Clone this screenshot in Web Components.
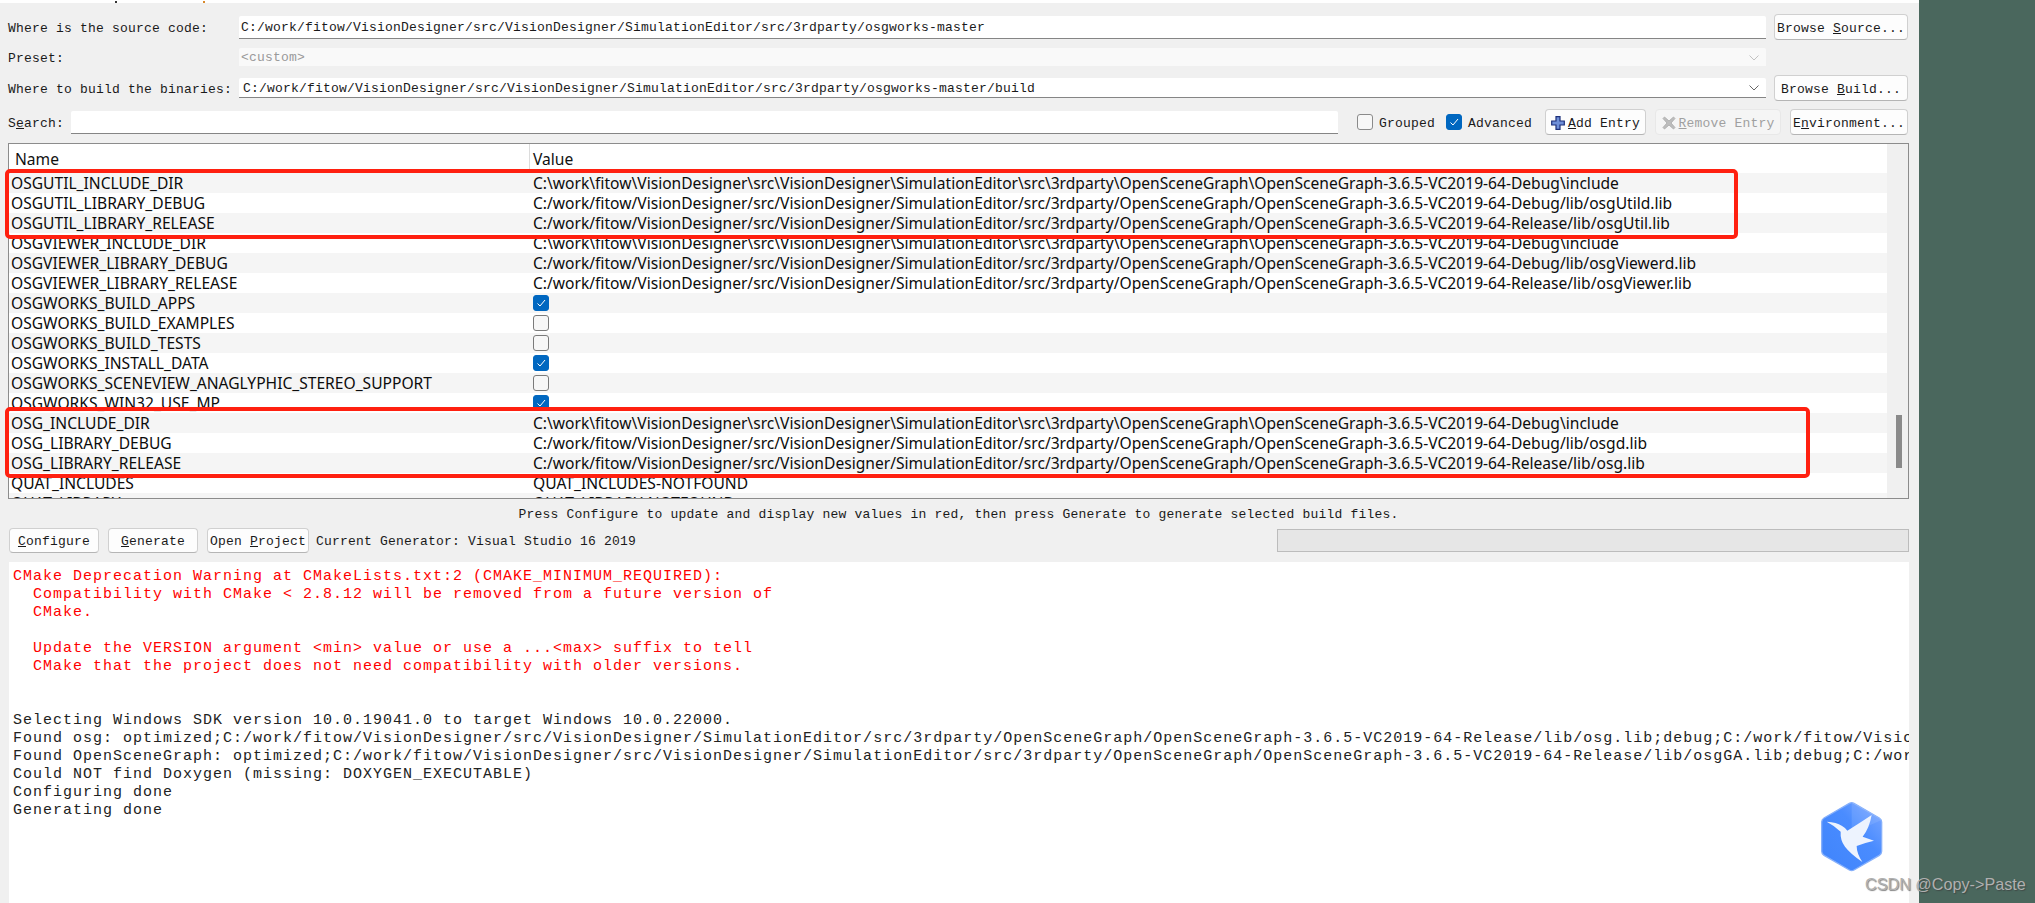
<!DOCTYPE html>
<html><head><meta charset="utf-8">
<style>
html,body{margin:0;padding:0;height:903px;overflow:hidden;background:#4a675d}
body{font-family:"Liberation Mono",monospace}
</style></head><body>
<cm-window>
  <cm-strip></cm-strip>
  <cm-form>
    <cm-label>Where is the source code:</cm-label>
    <cm-field h="23">C:/work/fitow/VisionDesigner/src/VisionDesigner/SimulationEditor/src/3rdparty/osgworks-master</cm-field>
    <cm-btn>Browse <u>S</u>ource...</cm-btn>
    <cm-label>Preset:</cm-label>
    <cm-field h="19" disabled combo>&lt;custom&gt;</cm-field>
    <span></span>
    <cm-label>Where to build the binaries:</cm-label>
    <cm-field h="20" combo style="padding-left:4px">C:/work/fitow/VisionDesigner/src/VisionDesigner/SimulationEditor/src/3rdparty/osgworks-master/build</cm-field>
    <cm-btn>Browse <u>B</u>uild...</cm-btn>
  </cm-form>
  <cm-search>
    <cm-label>S<u>e</u>arch:</cm-label>
    <cm-field h="23" style="width:1267px;margin-left:7px"></cm-field>
    <cm-check style="margin-left:19px">Grouped</cm-check>
    <cm-check checked style="margin-left:11px">Advanced</cm-check>
    <cm-btn style="width:101px;margin-left:13px"><svg slot="icon" width="14" height="14" viewBox="0 0 14 14"><path d="M5 .7h4v4.300h4.300v4H9v4.300H5V9H.7V5H5z" fill="#6f8fd8" stroke="#1c2f7a" stroke-width="1.200"/></svg><u>A</u>dd Entry</cm-btn>
    <cm-btn disabled style="width:126px;margin-left:9px"><svg slot="icon" width="14" height="14" viewBox="0 0 14 14"><path d="M2.500 1 7 5l4.500-4L13 2.500 9 7l4 4.500L11.500 13 7 9l-4.500 4L1 11.500 5 7 1 2.500z" fill="#bdbdbd" stroke="#a8a8a8" stroke-width=".8"/></svg><u>R</u>emove Entry</cm-btn>
    <cm-btn style="width:118px;margin-left:9px">E<u>n</u>vironment...</cm-btn>
  </cm-search>
  <cm-table>
    <cm-row name="OSGUTIL_INCLUDE_DIR" value="C:\work\fitow\VisionDesigner\src\VisionDesigner\SimulationEditor\src\3rdparty\OpenSceneGraph\OpenSceneGraph-3.6.5-VC2019-64-Debug\include"></cm-row>
    <cm-row name="OSGUTIL_LIBRARY_DEBUG" value="C:/work/fitow/VisionDesigner/src/VisionDesigner/SimulationEditor/src/3rdparty/OpenSceneGraph/OpenSceneGraph-3.6.5-VC2019-64-Debug/lib/osgUtild.lib"></cm-row>
    <cm-row name="OSGUTIL_LIBRARY_RELEASE" value="C:/work/fitow/VisionDesigner/src/VisionDesigner/SimulationEditor/src/3rdparty/OpenSceneGraph/OpenSceneGraph-3.6.5-VC2019-64-Release/lib/osgUtil.lib"></cm-row>
    <cm-row name="OSGVIEWER_INCLUDE_DIR" value="C:\work\fitow\VisionDesigner\src\VisionDesigner\SimulationEditor\src\3rdparty\OpenSceneGraph\OpenSceneGraph-3.6.5-VC2019-64-Debug\include"></cm-row>
    <cm-row name="OSGVIEWER_LIBRARY_DEBUG" value="C:/work/fitow/VisionDesigner/src/VisionDesigner/SimulationEditor/src/3rdparty/OpenSceneGraph/OpenSceneGraph-3.6.5-VC2019-64-Debug/lib/osgViewerd.lib"></cm-row>
    <cm-row name="OSGVIEWER_LIBRARY_RELEASE" value="C:/work/fitow/VisionDesigner/src/VisionDesigner/SimulationEditor/src/3rdparty/OpenSceneGraph/OpenSceneGraph-3.6.5-VC2019-64-Release/lib/osgViewer.lib"></cm-row>
    <cm-row name="OSGWORKS_BUILD_APPS" bool="on"></cm-row>
    <cm-row name="OSGWORKS_BUILD_EXAMPLES" bool="off"></cm-row>
    <cm-row name="OSGWORKS_BUILD_TESTS" bool="off"></cm-row>
    <cm-row name="OSGWORKS_INSTALL_DATA" bool="on"></cm-row>
    <cm-row name="OSGWORKS_SCENEVIEW_ANAGLYPHIC_STEREO_SUPPORT" bool="off"></cm-row>
    <cm-row name="OSGWORKS_WIN32_USE_MP" bool="on"></cm-row>
    <cm-row name="OSG_INCLUDE_DIR" value="C:\work\fitow\VisionDesigner\src\VisionDesigner\SimulationEditor\src\3rdparty\OpenSceneGraph\OpenSceneGraph-3.6.5-VC2019-64-Debug\include"></cm-row>
    <cm-row name="OSG_LIBRARY_DEBUG" value="C:/work/fitow/VisionDesigner/src/VisionDesigner/SimulationEditor/src/3rdparty/OpenSceneGraph/OpenSceneGraph-3.6.5-VC2019-64-Debug/lib/osgd.lib"></cm-row>
    <cm-row name="OSG_LIBRARY_RELEASE" value="C:/work/fitow/VisionDesigner/src/VisionDesigner/SimulationEditor/src/3rdparty/OpenSceneGraph/OpenSceneGraph-3.6.5-VC2019-64-Release/lib/osg.lib"></cm-row>
    <cm-row name="QUAT_INCLUDES" value="QUAT_INCLUDES-NOTFOUND"></cm-row>
    <cm-row name="QUAT_LIBRARY" value="QUAT_LIBRARY-NOTFOUND"></cm-row>
  </cm-table>
  <cm-status>Press Configure to update and display new values in red, then press Generate to generate selected build files.</cm-status>
  <cm-actions>
    <cm-btn style="width:90px"><u>C</u>onfigure</cm-btn>
    <cm-btn style="width:90px;margin-left:9px"><u>G</u>enerate</cm-btn>
    <cm-btn style="width:102px;margin-left:9px">Open <u>P</u>roject</cm-btn>
    <cm-label style="margin-left:7px;flex:1">Current Generator: Visual Studio 16 2019</cm-label>
    <cm-progress></cm-progress>
  </cm-actions>
  <cm-log>
    <cm-line red>CMake Deprecation Warning at CMakeLists.txt:2 (CMAKE_MINIMUM_REQUIRED):</cm-line>
    <cm-line red>  Compatibility with CMake &lt; 2.8.12 will be removed from a future version of</cm-line>
    <cm-line red>  CMake.</cm-line>
    <cm-line red> </cm-line>
    <cm-line red>  Update the VERSION argument &lt;min&gt; value or use a ...&lt;max&gt; suffix to tell</cm-line>
    <cm-line red>  CMake that the project does not need compatibility with older versions.</cm-line>
    <cm-line> </cm-line>
    <cm-line> </cm-line>
    <cm-line>Selecting Windows SDK version 10.0.19041.0 to target Windows 10.0.22000.</cm-line>
    <cm-line>Found osg: optimized;C:/work/fitow/VisionDesigner/src/VisionDesigner/SimulationEditor/src/3rdparty/OpenSceneGraph/OpenSceneGraph-3.6.5-VC2019-64-Release/lib/osg.lib;debug;C:/work/fitow/VisionDesigner/src</cm-line>
    <cm-line>Found OpenSceneGraph: optimized;C:/work/fitow/VisionDesigner/src/VisionDesigner/SimulationEditor/src/3rdparty/OpenSceneGraph/OpenSceneGraph-3.6.5-VC2019-64-Release/lib/osgGA.lib;debug;C:/work/fitow</cm-line>
    <cm-line>Could NOT find Doxygen (missing: DOXYGEN_EXECUTABLE)</cm-line>
    <cm-line>Configuring done</cm-line>
    <cm-line>Generating done</cm-line>
  </cm-log>
  <cm-redbox style="left:5px;top:169px;width:1733px;height:70px"></cm-redbox>
  <cm-redbox style="left:5px;top:407px;width:1805px;height:71px"></cm-redbox>
  <cm-logo></cm-logo>
</cm-window>
<cm-mark>CSDN @Copy-&gt;Paste</cm-mark>
<script>
function def(name, css, html, extra){
  customElements.define(name, class extends HTMLElement{
    constructor(){super();this.attachShadow({mode:'open'}).innerHTML='<style>'+css+'</style>'+(html||'<slot></slot>');}
    connectedCallback(){ if(extra) extra.call(this); }
  });
}
const mono='font:13px/1 "Liberation Mono",monospace;letter-spacing:.2px;color:#1a1a1a;';
def('cm-window',':host{display:flex;flex-direction:column;width:1919px;height:903px;background:#f0f0f0;position:relative;overflow:hidden}');
def('cm-strip',`:host{display:flex;height:3px;background:#fff;margin-bottom:11px}
i{display:block;width:2px;height:2px;margin-top:1px}`,
'<i style="background:#333;margin-left:115px"></i><i style="background:#d9892b;margin-left:86px"></i>');
def('cm-form',':host{display:grid;grid-template-columns:231px 1527px 142px;grid-template-rows:26px 19px 26px;row-gap:8px;align-items:center;padding-left:8px}::slotted(cm-btn){margin-left:8px}');
def('cm-label',':host{display:block;white-space:pre;padding-top:2px;'+mono+'}');
def('cm-field',`:host{display:flex;align-items:center;justify-content:space-between;box-sizing:border-box;background:#fff;border-bottom:1.5px solid #858585;border-radius:2px 2px 0 0;padding:1px 6px 0 2px;white-space:pre;overflow:hidden;${mono}}
:host([disabled]){background:#f9f9f9;border-bottom:1px solid #f0f0f0;color:#9a9a9a}
svg{flex:none;margin-right:1px}`,
'<slot></slot>',function(){
  this.style.height=this.getAttribute('h')+'px';
  if(this.hasAttribute('combo')){
    const d=this.hasAttribute('disabled');
    this.shadowRoot.innerHTML+='<svg width="10" height="6" viewBox="0 0 10 6"><path d="M.5.5 5 5 9.500.5" fill="none" stroke="'+(d?'#c2c2c2':'#666')+'"/></svg>';
  }
});
def('cm-btn',`:host{display:flex;align-items:center;justify-content:center;gap:3px;box-sizing:border-box;height:26px;padding-top:2px;background:#fdfdfd;border:1px solid #d0d0d0;border-bottom-color:#b5b5b5;border-radius:4px;white-space:pre;${mono}}
:host([disabled]){background:#f5f5f5;border-color:#e8e8e8;color:#a0a0a0}
span{display:block}`,'<slot name="icon"></slot><span><slot></slot></span>');
def('cm-search',':host{display:flex;align-items:center;height:26px;margin-top:8px;padding-left:8px}');
def('cm-check',`:host{display:flex;align-items:center;gap:6px;white-space:pre;${mono}}
i{display:block;box-sizing:border-box;width:16px;height:16px;border-radius:3px;border:1px solid #8a8a8a;background:#f7f7f7}
:host([checked]) i{background:#0067c0;border-color:#0067c0}
svg{display:none;margin:2px}:host([checked]) svg{display:block}
span{display:block;padding-top:2px}`,
'<i><svg width="10" height="10" viewBox="0 0 10 10"><path d="M1.500 5.500 4 8 9 2" fill="none" stroke="#fff" stroke-width="1"/></svg></i><span><slot></slot></span>');
def('cm-table',`:host{display:block;box-sizing:border-box;height:356px;margin:8px 10px 0 8px;background:#fff;border:1px solid #8c8c8c;position:relative;overflow:hidden;font:15.6px "Noto Sans",sans-serif}
.h{display:flex;height:29px;align-items:center;width:1878px;color:#111}
.h span:first-child{width:521px;padding-left:6px;box-sizing:border-box;height:100%;display:flex;align-items:center;border-right:1px solid #dcdcdc}
.h span:last-child{padding-left:3px}
.sb{position:absolute;right:0;top:0;bottom:0;width:21px;background:#f0f0f0}
.th{position:absolute;left:9px;width:6px;top:271px;height:53px;background:#8a8a8a}
.b{width:1878px}`,
'<div class="h"><span>Name</span><span>Value</span></div><div class="b"><slot></slot></div><div class="sb"><div class="th"></div></div>');
def('cm-row',`:host{display:flex;height:20px;align-items:center;white-space:pre;color:#0c0c0c;font:15.6px/20px "Noto Sans",sans-serif}
:host(:nth-child(odd)){background:#f5f5f5}
.n{width:524px;padding-left:2px;box-sizing:border-box}
.c{display:block;box-sizing:border-box;width:16px;height:16px;border-radius:3px;border:1px solid #7a7a7a;background:#f7f7f7;position:relative}
.c.on{background:#0067c0;border-color:#0067c0}
svg{display:block;margin:2px}`,'<span class="n"></span><span class="v"></span>',function(){
  this.shadowRoot.querySelector('.n').textContent=this.getAttribute('name');
  const v=this.shadowRoot.querySelector('.v'),b=this.getAttribute('bool');
  if(b){v.className='c'+(b=='on'?' on':'');if(b=='on')v.innerHTML='<svg width="10" height="10" viewBox="0 0 10 10"><path d="M1.500 5.500 4 8 9 2" fill="none" stroke="#fff" stroke-width="1"/></svg>';}
  else v.textContent=this.getAttribute('value');
});
def('cm-status',`:host{display:block;height:29px;text-align:center;padding-right:2px;white-space:pre;${mono.replace('13px/1','13px/31px')}}`);
def('cm-actions',':host{display:flex;align-items:center;height:25px;padding-left:9px}::slotted(cm-btn){height:25px}');
def('cm-progress',':host{display:block;box-sizing:border-box;width:632px;height:23px;margin-right:10px;background:#e6e6e6;border:1px solid #bcbcbc}');
def('cm-log',':host{display:block;flex:1;min-height:0;margin:9px 10px 0 9px;padding:6px 0 0 4px;background:#fff;overflow:hidden}');
def('cm-line',':host{display:block;height:18px;white-space:pre;font:15px/18px "Liberation Mono",monospace;letter-spacing:1px;color:#222}:host([red]){color:#f00}');
def('cm-redbox',':host{display:block;position:absolute;box-sizing:border-box;border:4px solid #ff2010;border-radius:5px;pointer-events:none}');
def('cm-logo',':host{display:block;position:absolute;left:1810px;top:790px;width:90px;height:90px}',
`<svg width="90" height="90" viewBox="0 0 270 270"><defs><linearGradient id="g" x1="0" y1="1" x2="1" y2="0"><stop offset="0" stop-color="#3f84fb"/><stop offset=".6" stop-color="#4a8cff"/><stop offset="1" stop-color="#7fa9ff"/></linearGradient></defs>
<path d="M118 40a14 14 0 0 1 14 0l76 44a14 14 0 0 1 7 12v88a14 14 0 0 1-7 12l-76 44a14 14 0 0 1-14 0l-76-44a14 14 0 0 1-7-12V96a14 14 0 0 1 7-12z" fill="url(#g)" stroke="#86b0fb" stroke-width="4"/>
<path d="M125 40 125 130 215 90 208 84 132 40z" fill="#fff" opacity=".1"/>
<path d="M50 95Q80 97 95 107 105 112 112 122 140 105 185 75 178 115 158 140L192 152Q165 158 140 168 140 190 157 216 120 190 105 170 90 150 92 125 75 108 50 95Z" fill="#edf3fe"/></svg>`);
def('cm-mark',':host{display:block;position:absolute;left:1865px;top:874px;font:16.2px/20px "Liberation Sans",sans-serif;color:#b0b0b0;text-shadow:1px 1px 1px rgba(60,60,60,.65);white-space:pre}');
</script>
</body></html>
